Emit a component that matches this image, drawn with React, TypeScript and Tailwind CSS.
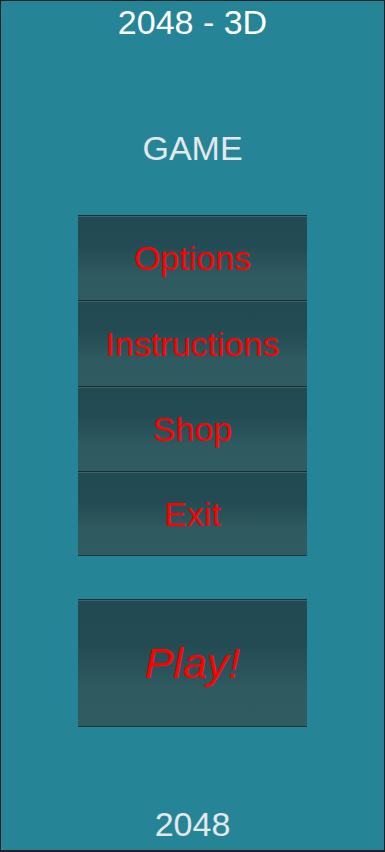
import React from "react";

const font = { fontFamily: '"Liberation Sans", Arial, sans-serif' };

function MenuButton({ label, h }: { label: string; h: string }) {
  return (
    <div
      className={`${h} w-full flex items-center justify-center border-t border-[#162f35] shadow-[inset_0_1px_0_#3d6268] bg-[linear-gradient(to_bottom,#224a52_0%,#234b53_35%,#2e5a60_70%,#2f5b61_100%)]`}
    >
      <span className="text-[34px] leading-none text-[#ff0000]">{label}</span>
    </div>
  );
}

export default function App() {
  return (
    <div
      className="w-[385px] h-[852px] bg-[#268497] border-l border-t border-r border-b-2 border-[#222222] flex flex-col items-center box-border"
      style={font}
    >
      <div className="mt-[4px] h-[34px] text-[34px] leading-none text-white">2048 - 3D</div>
      <div className="mt-[92px] h-[34px] text-[34px] leading-none text-[#e3e9eb]">GAME</div>
      <div className="mt-[50px] w-[229px] flex flex-col border-b border-[#1b363c]">
        <MenuButton label="Options" h="h-[85px]" />
        <MenuButton label="Instructions" h="h-[86px]" />
        <MenuButton label="Shop" h="h-[85px]" />
        <MenuButton label="Exit" h="h-[84px]" />
      </div>
      <div className="mt-[43px] w-[229px] h-[128px] flex items-center justify-center border-t border-b border-[#1b363c] shadow-[inset_0_1px_0_#3d6268] bg-[linear-gradient(to_bottom,#224a52_0%,#234b53_35%,#2e5a60_70%,#2f5b61_100%)]">
        <span className="text-[43px] leading-none italic text-[#ff0000]">Play!</span>
      </div>
      <div className="mt-[80px] h-[34px] text-[34px] leading-none text-[#e3e9eb]">2048</div>
    </div>
  );
}
